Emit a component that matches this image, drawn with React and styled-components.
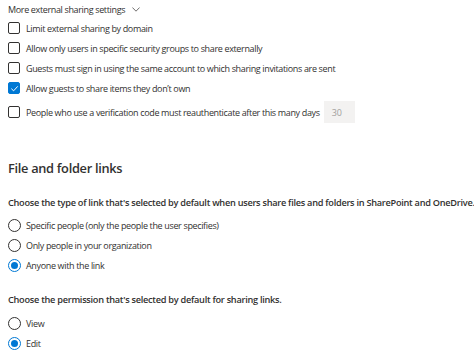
import React from "react";
import styled, { createGlobalStyle } from "styled-components";

const Global = createGlobalStyle`
  html, body { margin: 0; padding: 0; background: #ffffff; }
  body { font-family: "Open Sans", "Noto Sans", sans-serif; color: #323130; }
`;

const Page = styled.div`
  padding: 0 8px;
  display: flex;
  flex-direction: column;
`;

const Toggle = styled.div`
  height: 18px;
  display: flex;
  align-items: center;
  gap: 7px;
  font-size: 9px;
  letter-spacing: -0.35px;
  color: #323130;
`;

const List = styled.div`
  display: flex;
  flex-direction: column;
  margin-top: ${(p) => p.$mt || 0}px;
`;

const Row = styled.div`
  height: ${(p) => p.$h || 20}px;
  margin-top: ${(p) => p.$mt || 0}px;
  display: flex;
  align-items: center;
  font-size: 9px;
  letter-spacing: -0.35px;
  color: #323130;
`;

const Box = styled.span`
  width: 12px;
  height: 12px;
  box-sizing: border-box;
  border: 1px solid ${(p) => (p.$on ? "#0078d4" : "#323130")};
  background: ${(p) => (p.$on ? "#0078d4" : "#fff")};
  border-radius: 2px;
  margin-right: 6px;
  flex: none;
  display: flex;
  align-items: center;
  justify-content: center;
`;

const Radio = styled.span`
  width: 13px;
  height: 13px;
  box-sizing: border-box;
  border: 1px solid ${(p) => (p.$on ? "#0078d4" : "#323130")};
  border-radius: 50%;
  margin-right: 5px;
  flex: none;
  display: flex;
  align-items: center;
  justify-content: center;
  &::after {
    content: "";
    display: ${(p) => (p.$on ? "block" : "none")};
    width: 7px;
    height: 7px;
    border-radius: 50%;
    background: #0078d4;
  }
`;

const Days = styled.span`
  width: 31px;
  height: 22px;
  margin-left: 4px;
  background: #f3f2f1;
  color: #a19f9d;
  font-size: 9px;
  letter-spacing: 0;
  box-sizing: border-box;
  padding-left: 8px;
  display: flex;
  align-items: center;
`;

const Heading = styled.h2`
  margin: 35px 0 0;
  font-size: 12.8px;
  letter-spacing: -0.3px;
  line-height: 20px;
  font-weight: 600;
  color: #323130;
`;

const Prompt = styled.p`
  margin: ${(p) => p.$mt}px 0 0;
  font-size: 9.2px;
  letter-spacing: -0.27px;
  line-height: 14px;
  font-weight: 600;
  color: #323130;
  white-space: nowrap;
`;

const Check = () => (
  <svg width="9" height="9" viewBox="0 0 10 10">
    <path d="M1.5 5.2 L4 7.6 L8.6 2.6" fill="none" stroke="#fff" strokeWidth="1.1" />
  </svg>
);

const Chevron = () => (
  <svg width="8" height="5" viewBox="0 0 8 5">
    <path d="M0.4 0.5 L4 4.2 L7.6 0.5" fill="none" stroke="#605e5c" strokeWidth="0.9" />
  </svg>
);

export default function App() {
  const checks = [
    ["Limit external sharing by domain", false],
    ["Allow only users in specific security groups to share externally", false],
    ["Guests must sign in using the same account to which sharing invitations are sent", false],
    ["Allow guests to share items they don\u2019t own", true],
  ];
  return (
    <Page>
      <Global />
      <Toggle>
        More external sharing settings <Chevron />
      </Toggle>
      <List>
        {checks.map(([t, on]) => (
          <Row key={t}>
            <Box $on={on}>{on && <Check />}</Box>
            {t}
          </Row>
        ))}
        <Row $h={22} $mt={3}>
          <Box />
          People who use a verification code must reauthenticate after this many days
          <Days>30</Days>
        </Row>
      </List>
      <Heading>File and folder links</Heading>
      <Prompt $mt={18}>
        Choose the type of link that's selected by default when users share files and folders in SharePoint and OneDrive.
      </Prompt>
      <List $mt={5}>
        <Row><Radio />Specific people (only the people the user specifies)</Row>
        <Row><Radio />Only people in your organization</Row>
        <Row><Radio $on />Anyone with the link</Row>
      </List>
      <Prompt $mt={18}>Choose the permission that's selected by default for sharing links.</Prompt>
      <List $mt={6}>
        <Row><Radio />View</Row>
        <Row><Radio $on />Edit</Row>
      </List>
    </Page>
  );
}
